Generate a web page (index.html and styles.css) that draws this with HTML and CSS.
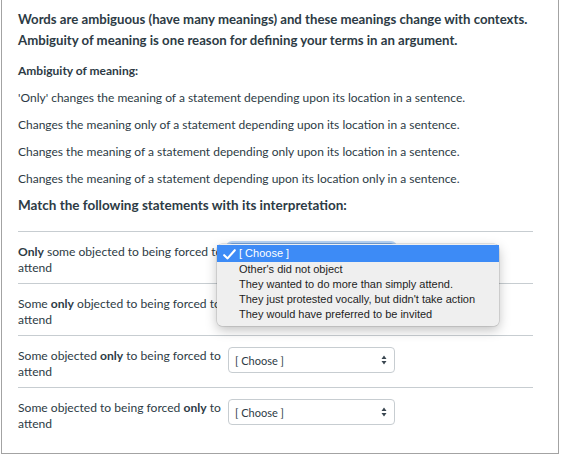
FILE: index.html
```html
<!DOCTYPE html>
<html>
<head>
<meta charset="utf-8">
<link rel="stylesheet" href="styles.css">
</head>
<body>
<div class="panel">
  <h2 class="title">Words are ambiguous (have many meanings) and these meanings change with contexts. Ambiguity of meaning is one reason for defining your terms in an argument.</h2>
  <p class="sub">Ambiguity of meaning:</p>
  <p class="line">'Only' changes the meaning of a statement depending upon its location in a sentence.</p>
  <p class="line">Changes the meaning only of a statement depending upon its location in a sentence.</p>
  <p class="line">Changes the meaning of a statement depending only upon its location in a sentence.</p>
  <p class="line">Changes the meaning of a statement depending upon its location only in a sentence.</p>
  <p class="match">Match the following statements with its interpretation:</p>
  <div class="rows">
    <div class="row">
      <div class="label"><b>Only</b> some objected to being forced to attend</div>
      <div class="select focused"><span>[ Choose ]</span><svg class="arr" width="6" height="10" viewBox="0 0 6 10"><path d="M3 0.5L5.5 4H0.5z M3 9.5L5.5 6H0.5z" fill="#3a4650"/></svg></div>
      <div class="popup">
        <div class="opt sel"><svg class="check" width="13" height="11" viewBox="0 0 13 11"><path d="M1.2 6.2L4.6 9.4L11.8 1.2" fill="none" stroke="#fff" stroke-width="2.1" stroke-linecap="round" stroke-linejoin="round"/></svg>[ Choose ]</div>
        <div class="opt">Other's did not object</div>
        <div class="opt">They wanted to do more than simply attend.</div>
        <div class="opt">They just protested vocally, but didn't take action</div>
        <div class="opt">They would have preferred to be invited</div>
      </div>
    </div>
    <div class="row">
      <div class="label">Some <b>only</b> objected to being forced to attend</div>
      <div class="select"><span>[ Choose ]</span><svg class="arr" width="6" height="10" viewBox="0 0 6 10"><path d="M3 0.5L5.5 4H0.5z M3 9.5L5.5 6H0.5z" fill="#3a4650"/></svg></div>
    </div>
    <div class="row">
      <div class="label">Some objected <b>only</b> to being forced to attend</div>
      <div class="select"><span>[ Choose ]</span><svg class="arr" width="6" height="10" viewBox="0 0 6 10"><path d="M3 0.5L5.5 4H0.5z M3 9.5L5.5 6H0.5z" fill="#3a4650"/></svg></div>
    </div>
    <div class="row last">
      <div class="label">Some objected to being forced <b>only</b> to attend</div>
      <div class="select"><span>[ Choose ]</span><svg class="arr" width="6" height="10" viewBox="0 0 6 10"><path d="M3 0.5L5.5 4H0.5z M3 9.5L5.5 6H0.5z" fill="#3a4650"/></svg></div>
    </div>
  </div>
</div>
</body>
</html>
```
FILE: styles.css
```css
html, body {
  margin: 0;
  padding: 0;
  background: #fff;
}
body {
  font-family: Lato, "Noto Sans", sans-serif;
  color: #2d3b45;
}
.panel {
  box-sizing: border-box;
  margin-left: 1px;
  width: 558px;
  height: 454px;
  border: 1px solid #a3a3a3;
  border-top: none;
  padding: 9px 14px 0 16px;
}
.title {
  margin: 0;
  font-size: 13.2px;
  font-weight: 700;
  line-height: 21px;
}
.sub {
  margin: 11px 0 0;
  font-size: 12px;
  font-weight: 700;
  line-height: 18px;
}
.line {
  margin: 9px 0 0;
  font-size: 12px;
  line-height: 18px;
}
.match {
  margin: 7px 0 0;
  font-size: 13.5px;
  font-weight: 700;
  line-height: 20px;
}
.rows {
  margin-top: 16px;
  margin-right: 11px;
  border-top: 1px solid #c7cdd1;
}
.row {
  position: relative;
  display: flex;
  align-items: flex-start;
  gap: 0;
  padding: 12px 0 7px;
  border-bottom: 1px solid #c7cdd1;
}
.row.last {
  border-bottom: none;
}
.label {
  width: 210px;
  font-size: 12.1px;
  line-height: 16px;
}
.label b {
  font-weight: 700;
}
.select {
  box-sizing: border-box;
  margin-top: -1px;
  width: 167px;
  height: 26px;
  border: 1px solid #c7cdd1;
  border-radius: 4px;
  display: flex;
  align-items: center;
  justify-content: space-between;
  padding: 0 7px 0 6px;
  font-size: 11px;
  color: #2d3b45;
  background: #fff;
}
.select.focused {
  border-color: #7fb0ea;
  box-shadow: 0 0 0 2px #b8d5f7;
}
.arr {
  display: block;
}
.popup {
  position: absolute;
  left: 199px;
  top: 12px;
  width: 282px;
  box-sizing: border-box;
  padding: 1px 0 4px;
  background: #efefef;
  border-radius: 5px;
  box-shadow: 0 0 0 0.5px rgba(0,0,0,0.18), 0 4px 12px rgba(0,0,0,0.25);
  font-family: "Liberation Sans", Arial, sans-serif;
  font-size: 11px;
  color: #1e1e1e;
  z-index: 5;
}
.opt {
  position: relative;
  line-height: 15px;
  padding-left: 22px;
  white-space: nowrap;
}
.opt.sel {
  background: #3d8bf6;
  color: #fff;
  line-height: 17px;
}
.check {
  position: absolute;
  left: 6px;
  top: 4px;
}
```
